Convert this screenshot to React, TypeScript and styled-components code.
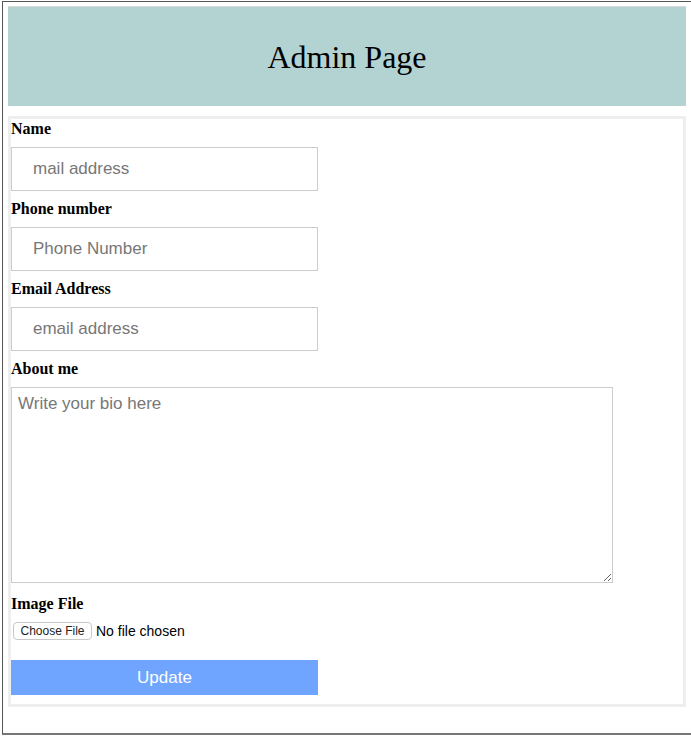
import React from 'react';
import styled, { createGlobalStyle } from 'styled-components';

const GlobalStyle = createGlobalStyle`
  html, body {
    margin: 0;
    padding: 0;
    background: #ffffff;
  }
  body {
    font-family: 'Liberation Serif', 'Times New Roman', serif;
    color: #000000;
  }
`;

const Frame = styled.div`
  box-sizing: border-box;
  height: 734px;
  margin: 1px 0 0 2px;
  padding: 4px 5px 0 5px;
  border: 1px solid #555555;
  border-right: none;
  border-bottom: 2px solid #777777;
`;

const Header = styled.header`
  box-sizing: border-box;
  height: 100px;
  border-top: 1px solid #d8d8d8;
  background-color: #b2d3d2;
  display: flex;
  align-items: center;
  justify-content: center;
`;

const Title = styled.h1`
  margin: 0;
  padding-top: 2px;
  font-family: 'Liberation Serif', 'Times New Roman', serif;
  font-size: 32px;
  font-weight: 400;
  color: #000000;
`;

const Form = styled.form`
  margin-top: 10px;
  border: 3px solid #eeeeee;
  padding: 1px 0 9px 0;
  display: flex;
  flex-direction: column;
  align-items: flex-start;
`;

const Label = styled.label`
  display: block;
  font-family: 'Liberation Serif', 'Times New Roman', serif;
  font-size: 16px;
  font-weight: 700;
  line-height: 18px;
  margin-bottom: 9px;
`;

const TextInput = styled.input`
  box-sizing: border-box;
  display: block;
  width: 307px;
  height: 44px;
  margin: 0 0 9px 0;
  padding: 0 0 0 21px;
  border: 1px solid #cccccc;
  font-family: 'Liberation Sans', Arial, sans-serif;
  font-size: 17px;
  outline: none;

  &::placeholder {
    color: #777777;
  }
`;

const TextArea = styled.textarea`
  box-sizing: border-box;
  display: block;
  width: 602px;
  height: 196px;
  margin: 0 0 12px 0;
  padding: 6px 6px;
  border: 1px solid #cccccc;
  font-family: 'Liberation Sans', Arial, sans-serif;
  font-size: 17px;
  line-height: 20px;
  outline: none;

  &::placeholder {
    color: #777777;
  }
`;

const FileRow = styled.div`
  display: flex;
  align-items: center;
  gap: 4px;
  height: 18px;
  margin: 0 0 20px 2px;
`;

const HiddenFile = styled.input`
  display: none;
`;

const ChooseButton = styled.label`
  box-sizing: border-box;
  display: inline-flex;
  align-items: center;
  justify-content: center;
  width: 79px;
  height: 18px;
  border: 1px solid #c8c8c8;
  border-radius: 4px;
  background: #ffffff;
  font-family: 'Liberation Sans', Arial, sans-serif;
  font-size: 12px;
  color: #222222;
  cursor: pointer;
`;

const FileStatus = styled.span`
  font-family: 'Liberation Sans', Arial, sans-serif;
  font-size: 14px;
  color: #000000;
`;

const SubmitButton = styled.button`
  width: 307px;
  height: 35px;
  border: none;
  background-color: #6fa5ff;
  color: #ffffff;
  font-family: 'Liberation Sans', Arial, sans-serif;
  font-size: 17px;
  cursor: pointer;
`;

const fields = [
  { id: 'name', label: 'Name', placeholder: 'mail address' },
  { id: 'phone', label: 'Phone number', placeholder: 'Phone Number' },
  { id: 'email', label: 'Email Address', placeholder: 'email address' },
];

export default function App() {
  return (
    <>
      <GlobalStyle />
      <Frame>
        <Header>
          <Title>Admin Page</Title>
        </Header>
        <Form onSubmit={(e) => e.preventDefault()}>
          {fields.map((f) => (
            <React.Fragment key={f.id}>
              <Label htmlFor={f.id}>{f.label}</Label>
              <TextInput id={f.id} type="text" placeholder={f.placeholder} />
            </React.Fragment>
          ))}
          <Label htmlFor="bio">About me</Label>
          <TextArea id="bio" placeholder="Write your bio here" />
          <Label htmlFor="image">Image File</Label>
          <FileRow>
            <HiddenFile id="image" type="file" />
            <ChooseButton htmlFor="image">Choose File</ChooseButton>
            <FileStatus>No file chosen</FileStatus>
          </FileRow>
          <SubmitButton type="submit">Update</SubmitButton>
        </Form>
      </Frame>
    </>
  );
}
